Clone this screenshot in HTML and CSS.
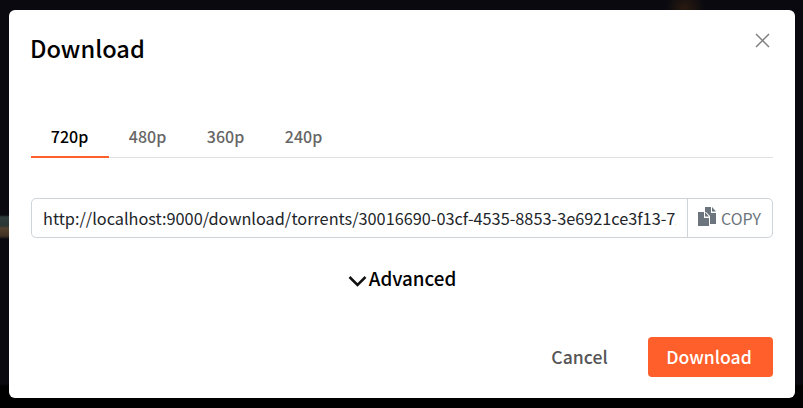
FILE: index.html
```html
<!DOCTYPE html>
<html lang="en">
<head>
    <meta charset="UTF-8">
    <title>Download</title>
    <link rel="stylesheet" href="styles.css">
</head>
<body>
    <div class="modal">
        <div class="modal-header">
            <h2>Download</h2>
            <button class="close" aria-label="Close">
                <svg width="15" height="15" viewBox="0 0 15 15"><path d="M1 1l13 13M14 1L1 14" stroke="#808080" stroke-width="1.5" fill="none"/></svg>
            </button>
        </div>

        <div class="tabs">
            <div class="tab active">720p</div>
            <div class="tab">480p</div>
            <div class="tab">360p</div>
            <div class="tab">240p</div>
        </div>

        <div class="link-row">
            <input class="link-text" type="text" readonly value="http://localhost:9000/download/torrents/30016690-03cf-4535-8853-3e6921ce3f13-720p.mp4">
            <div class="copy">
                <svg width="20" height="19" viewBox="0 0 20 19"><path d="M7 0h6v6h5v11h-6V9L8 5H7z" fill="#6c757d"/><path d="M14 0l4 4.500h-4z" fill="#6c757d"/><path d="M0 5h6v6h5v8H0z" fill="#6c757d"/><path d="M7 5l4 4.500H7z" fill="#6c757d"/></svg>
                <span>COPY</span>
            </div>
        </div>

        <div class="advanced">
            <svg width="20" height="12" viewBox="0 0 20 12"><path d="M1.500 2l8 8 8-8" stroke="#111" stroke-width="2.500" fill="none"/></svg>
            <span>Advanced</span>
        </div>

        <div class="modal-footer">
            <button class="btn-cancel">Cancel</button>
            <button class="btn-download">Download</button>
        </div>
    </div>
</body>
</html>
```

FILE: styles.css
```css
* {
    box-sizing: border-box;
}
body {
    margin: 0;
    height: 408px;
    overflow: hidden;
    background:
        radial-gradient(circle at 685px 8px, #2a1a10, rgba(42, 26, 16, 0) 20px) no-repeat,
        linear-gradient(#09090f, #09090f 215px, #2f3b3b 217px, #2a3534 226px, #54422f 228px, #3f3124 236px, #09090f 239px, #09090f 384px, #000 386px) left top / 9px 408px no-repeat,
        linear-gradient(#09090f, #09090f 384px, #000 386px) no-repeat;
    background-color: #000;
    font-family: "Noto Sans CJK SC", "Noto Sans", sans-serif;
    padding: 10px 8px 10px 9px;
}
.modal {
    background: #fff;
    border-radius: 6px;
    height: 388px;
    padding: 21px 22px 21px;
    display: flex;
    flex-direction: column;
}
.modal-header {
    display: flex;
    justify-content: space-between;
    align-items: flex-start;
    height: 85px;
}
.modal-header h2 {
    margin: 0 0 0 -1px;
    font-size: 23.600px;
    line-height: 34px;
    font-weight: 500;
    color: #000;
}
.close {
    border: 0;
    background: none;
    padding: 0;
    margin: 2px 3px 0 0;
    height: 15px;
}
.tabs {
    display: flex;
    border-bottom: 1px solid #e2e2e2;
    height: 42px;
}
.tab {
    width: 78px;
    height: 42px;
    padding-right: 1px;
    text-align: center;
    font-size: 16px;
    line-height: 40px;
    font-weight: 500;
    color: #666;
}
.tab.active {
    color: #000;
    border-bottom: 2px solid #ff5f2a;
}
.link-row {
    display: flex;
    margin-top: 40px;
    height: 40px;
    border: 1px solid #ced4da;
    border-radius: 5px;
}
.link-text {
    flex: 1;
    min-width: 0;
    padding: 0 11px;
    border: 0;
    outline: 0;
    background: none;
    font-family: inherit;
    font-size: 16.300px;
    color: #212529;
}
.copy {
    width: 85px;
    flex: none;
    display: flex;
    align-items: center;
    gap: 3px;
    padding-left: 10px;
    border-left: 1px solid #ced4da;
    font-size: 16px;
    color: #6c757d;
}
.copy svg {
    margin-top: -3px;
}
.advanced {
    margin-top: 25px;
    display: flex;
    justify-content: center;
    align-items: center;
    font-size: 18.800px;
    line-height: 30px;
    font-weight: 500;
    color: #000;
}
.advanced svg {
    margin-top: 6px;
    margin-right: 1px;
}
.modal-footer {
    margin-top: auto;
    display: flex;
    justify-content: flex-end;
    align-items: center;
    gap: 16px;
}
.modal-footer button {
    height: 40px;
    border: 0;
    border-radius: 4px;
    font-family: inherit;
    font-size: 17.600px;
    font-weight: 500;
    padding: 0 0 2px;
}
.btn-cancel {
    background: none;
    color: #555;
    width: 105px;
}
.modal-footer .btn-download {
    background: #ff5f2a;
    color: #fff;
    width: 125px;
    padding-right: 3px;
}
```
